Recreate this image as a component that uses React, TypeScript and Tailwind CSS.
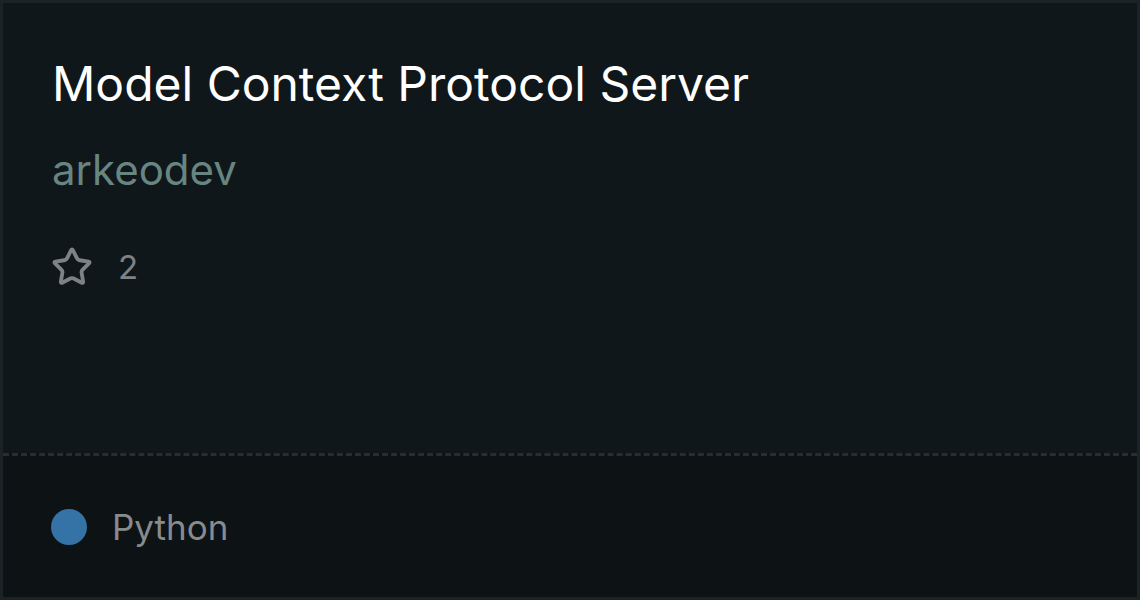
import React from "react";
import { Star } from "lucide-react";

export default function App() {
  return (
    <div
      className="w-[1140px] h-[600px] flex flex-col border-[3px] border-[#1b2327] bg-[#10171a] overflow-hidden"
      style={{ fontFamily: "Inter, 'Noto Sans', sans-serif" }}
    >
      <div className="flex-1 flex flex-col pl-[49px] pt-[52px]">
        <div className="text-[48px] leading-[58px] text-white">
          Model Context Protocol Server
        </div>
        <div className="mt-[32px] text-[42px] leading-[50px] text-[#678681]">arkeodev</div>
        <div className="mt-[51px] flex items-center gap-[25px] text-[#7c8285]">
          <Star size={42} strokeWidth={2.2} className="text-[#7c8285] -ml-[1px]" />
          <span className="text-[33px] leading-[42px]">2</span>
        </div>
      </div>
      <div className="h-[144px] border-t-[3px] border-dashed border-[#262e32] bg-[#0d1215] flex items-center pl-[48px] gap-[25px]">
        <div className="w-[36px] h-[36px] rounded-full bg-[#3572a5]" />
        <span className="text-[35px] leading-[40px] text-[#878b8e]">Python</span>
      </div>
    </div>
  );
}
